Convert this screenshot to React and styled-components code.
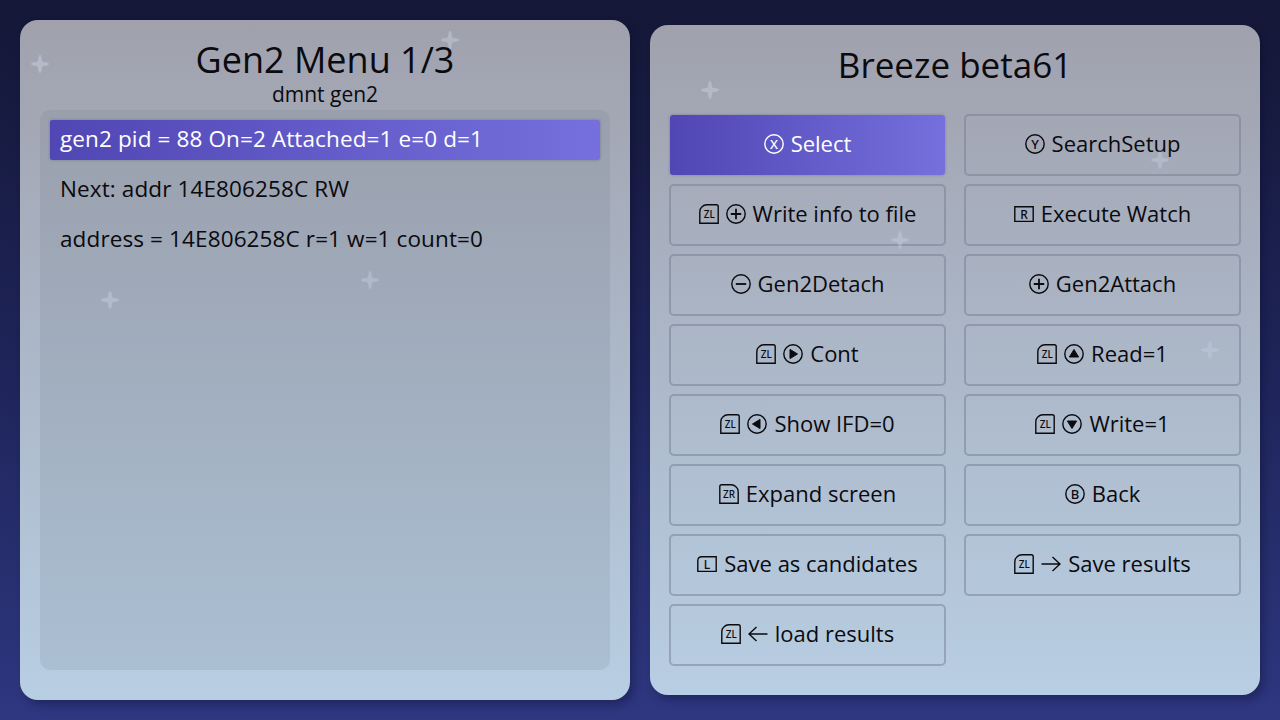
import React from "react";
import styled, { createGlobalStyle } from "styled-components";

const GlobalStyle = createGlobalStyle`
  html, body {
    margin: 0;
    padding: 0;
    height: 100%;
  }
  body {
    font-family: "Open Sans", "Noto Sans", sans-serif;
    color: #0a0a0f;
    overflow: hidden;
  }
`;

const Stage = styled.div`
  position: relative;
  width: 1280px;
  height: 720px;
  padding: 0 20px;
  box-sizing: border-box;
  display: flex;
  align-items: center;
  gap: 20px;
  overflow: hidden;
  background: linear-gradient(180deg, #141736 0%, #1e2458 50%, #2e3780 100%);
`;

const Panel = styled.section`
  width: 610px;
  height: ${(p) => p.$height}px;
  box-sizing: border-box;
  padding-top: 15px;
  border-radius: 18px;
  background: linear-gradient(180deg, #a0a1ad 0%, #b8cee3 100%);
  box-shadow: 4px 5px 8px -1px rgba(8, 10, 40, 0.35);
`;

const Title = styled.h1`
  margin: 0;
  height: 50px;
  line-height: 50px;
  font-size: ${(p) => p.$size}px;
  font-weight: 400;
  text-align: center;
`;

const Subtitle = styled.div`
  height: 20px;
  line-height: 18px;
  font-size: 21px;
  text-align: center;
`;

const List = styled.div`
  margin: 5px 20px 0;
  height: 560px;
  box-sizing: border-box;
  padding: 10px;
  display: flex;
  flex-direction: column;
  gap: 10px;
  border-radius: 10px;
  background: rgba(100, 112, 125, 0.14);
`;

const Row = styled.div`
  height: 40px;
  line-height: 37px;
  padding: 0 10px;
  font-size: 22.5px;
  letter-spacing: 0.12px;
  border-radius: 2px;
  color: ${(p) => (p.$selected ? "#fff" : "inherit")};
  background: ${(p) =>
    p.$selected ? "linear-gradient(90deg, #5046b4 0%, #7570dd 100%)" : "none"};
  box-shadow: ${(p) => (p.$selected ? "0 0 3px rgba(70, 70, 110, 0.4)" : "none")};
`;

const ButtonGrid = styled.div`
  margin: 24px 0 0 19px;
  display: grid;
  grid-template-columns: 277px 277px;
  grid-auto-rows: 62px;
  gap: 8px 18px;
`;

const Button = styled.div`
  display: flex;
  align-items: center;
  justify-content: center;
  gap: 7px;
  box-sizing: border-box;
  padding-bottom: 2px;
  font-size: 22px;
  border-radius: ${(p) => (p.$selected ? 3 : 5)}px;
  color: ${(p) => (p.$selected ? "#fff" : "inherit")};
  margin: ${(p) => (p.$selected ? "1px" : "0")};
  border: ${(p) => (p.$selected ? "none" : "2px solid rgba(115, 125, 145, 0.5)")};
  background: ${(p) =>
    p.$selected ? "linear-gradient(90deg, #5046b4 0%, #7570dd 100%)" : "none"};
  box-shadow: ${(p) => (p.$selected ? "0 0 3px rgba(70, 70, 110, 0.4)" : "none")};
`;

const Label = styled.span`
  padding-bottom: 2px;
`;

const Glyph = styled.svg`
  flex: none;
  width: 20px;
  height: 20px;
  display: block;
  fill: none;
  stroke: currentColor;
  stroke-width: 1.4;
`;

const GlyphLabel = styled.text`
  fill: currentColor;
  stroke: none;
  font-family: "Noto Sans", sans-serif;
  font-size: ${(p) => p.$size}px;
  font-weight: 500;
  text-anchor: middle;
`;

const Sparkle = styled.svg`
  position: absolute;
  left: ${(p) => p.$x - 10}px;
  top: ${(p) => p.$y - 10}px;
  width: 20px;
  height: 20px;
  fill: rgba(225, 232, 250, ${(p) => p.$alpha});
  pointer-events: none;
`;

const Circle = ({ children }) => (
  <Glyph viewBox="0 0 20 20">
    <circle cx="10" cy="10" r="9.2" />
    {children}
  </Glyph>
);

const Letter = ({ c }) => (
  <Circle>
    <GlyphLabel x="10" y="14.6" $size={13}>{c}</GlyphLabel>
  </Circle>
);

const Plus = () => (
  <Circle>
    <path d="M10 4.8v10.4M4.8 10h10.400" strokeWidth="1.800" />
  </Circle>
);

const Minus = () => (
  <Circle>
    <path d="M4.8 10h10.400" strokeWidth="1.800" />
  </Circle>
);

// d-pad style buttons, the triangle is the only thing that changes
const Pad = ({ d }) => (
  <Circle>
    <path d={d} fill="currentColor" stroke="currentColor" strokeWidth="1" strokeLinejoin="round" />
  </Circle>
);

const Trigger = ({ c }) => (
  <Glyph viewBox="0 0 20 20">
    <path d="M.8 19.300V8Q.8 4.600 2.800 3 5 .8 8 .8h9.400q1.800 0 1.800 1.800v16.700z" />
    <GlyphLabel x="10.200" y="14.200" $size={10}>{c}</GlyphLabel>
  </Glyph>
);

const TriggerR = () => (
  <Glyph viewBox="0 0 20 20">
    <path d="M.8 19.300V2.600Q.8.8 2.600.8H12q3 0 5.200 2.200 2 1.600 2 5v11.300z" />
    <GlyphLabel x="10" y="14.200" $size={10}>ZR</GlyphLabel>
  </Glyph>
);

const Bumper = ({ c }) => (
  <Glyph viewBox="0 0 20 20">
    <path d="M.8 17.400V7Q.8 2.800 5 2.800h14.200v14.600z" />
    <GlyphLabel x="10" y="14.800" $size={12}>{c}</GlyphLabel>
  </Glyph>
);

const BumperR = () => (
  <Glyph viewBox="0 0 20 20">
    <path d="M.8 2.800h18.400v14.600H.8z" />
    <GlyphLabel x="10" y="14.800" $size={12}>R</GlyphLabel>
  </Glyph>
);

const Arrow = ({ d }) => (
  <Glyph viewBox="0 0 20 20">
    <path d={d} />
  </Glyph>
);

const UP = "M10 5.500l4.600 7.500H5.400z";
const DOWN = "M10 14.500l4.600-7.500H5.400z";
const LEFT = "M5.500 10l7.500-4.600v9.200z";
const RIGHT = "M14.500 10L7 5.400v9.200z";

const buttons = [
  { label: "Select", icons: [<Letter c="X" />], selected: true },
  { label: "SearchSetup", icons: [<Letter c="Y" />] },
  { label: "Write info to file", icons: [<Trigger c="ZL" />, <Plus />] },
  { label: "Execute Watch", icons: [<BumperR />] },
  { label: "Gen2Detach", icons: [<Minus />] },
  { label: "Gen2Attach", icons: [<Plus />] },
  { label: "Cont", icons: [<Trigger c="ZL" />, <Pad d={RIGHT} />] },
  { label: "Read=1", icons: [<Trigger c="ZL" />, <Pad d={UP} />] },
  { label: "Show IFD=0", icons: [<Trigger c="ZL" />, <Pad d={LEFT} />] },
  { label: "Write=1", icons: [<Trigger c="ZL" />, <Pad d={DOWN} />] },
  { label: "Expand screen", icons: [<TriggerR />] },
  { label: "Back", icons: [<Letter c="B" />] },
  { label: "Save as candidates", icons: [<Bumper c="L" />] },
  { label: "Save results", icons: [<Trigger c="ZL" />, <Arrow d="M0.500 10h18.500M11.500 3l7.500 7-7.500 7" />] },
  { label: "load results", icons: [<Trigger c="ZL" />, <Arrow d="M19.500 10H1M8.500 3L1 10l7.500 7" />] },
];

const sparkles = [
  { x: 40, y: 64, a: 0.32 },
  { x: 450, y: 40, a: 0.28 },
  { x: 710, y: 90, a: 0.3 },
  { x: 1160, y: 160, a: 0.25 },
  { x: 900, y: 240, a: 0.25 },
  { x: 110, y: 300, a: 0.28 },
  { x: 370, y: 280, a: 0.25 },
  { x: 1210, y: 350, a: 0.2 },
];

export default function App() {
  return (
    <Stage>
      <GlobalStyle />
      <Panel $height={680}>
        <Title $size={36}>Gen2 Menu 1/3</Title>
        <Subtitle>dmnt gen2</Subtitle>
        <List>
          <Row $selected>gen2 pid = 88 On=2 Attached=1 e=0 d=1</Row>
          <Row>Next: addr 14E806258C RW</Row>
          <Row>address = 14E806258C r=1 w=1 count=0</Row>
        </List>
      </Panel>
      <Panel $height={670}>
        <Title $size={35}>Breeze beta61</Title>
        <ButtonGrid>
          {buttons.map((b) => (
            <Button key={b.label} $selected={b.selected}>
              {b.icons.map((icon, i) => (
                <React.Fragment key={i}>{icon}</React.Fragment>
              ))}
              <Label>{b.label}</Label>
            </Button>
          ))}
        </ButtonGrid>
      </Panel>
      {sparkles.map((s) => (
        <Sparkle key={`${s.x}-${s.y}`} $x={s.x} $y={s.y} $alpha={s.a} viewBox="0 0 20 20">
          <path d="M10 1q1.600 0 2 5.200 0 1.600 1.800 1.800Q19 8.400 19 10t-5.200 2q-1.800.2-1.800 1.800Q11.600 19 10 19t-2-5.200q0-1.600-1.800-1.800Q1 11.600 1 10t5.200-2Q8 7.800 8 6.200 8.400 1 10 1z" />
        </Sparkle>
      ))}
    </Stage>
  );
}
